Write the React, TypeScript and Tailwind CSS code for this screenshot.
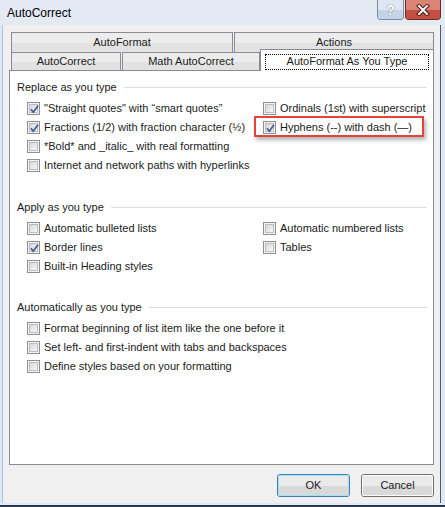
import React from "react";

const FONT = { fontFamily: '"Liberation Sans", Arial, sans-serif' };

function Check({ checked }: { checked?: boolean }) {
  return (
    <span className="relative w-[13px] h-[13px] shrink-0 border border-[#8e8f8f] bg-[#f4f4f4] p-[1px]">
      <span className="block w-full h-full border border-[#b9bcc0] bg-[#e6e7e8] bg-linear-to-br from-[#d6d7d9] to-[#f8f8f8]" />
      {checked && (
        <svg className="absolute left-[1px] top-[1px]" width="11" height="11" viewBox="0 0 11 11">
          <path d="M2 5.2 L4.3 8.2 L9 1.8" fill="none" stroke="#4a5c96" strokeWidth="1.8" strokeLinejoin="round" />
        </svg>
      )}
    </span>
  );
}

function Row({ label, checked, children }: { label: string; checked?: boolean; children?: React.ReactNode }) {
  return (
    <div className="relative h-[19px] flex items-center gap-[4px]">
      <Check checked={checked} />
      <span className="whitespace-nowrap leading-none">{label}</span>
      {children}
    </div>
  );
}

function Group({ title, children, className = "" }: { title: string; children: React.ReactNode; className?: string }) {
  return (
    <div className={className}>
      <div className="h-[16px] flex items-center gap-[7px]">
        <span className="whitespace-nowrap leading-none">{title}</span>
        <span className="flex-1 h-px bg-[#d5dfe5]" />
      </div>
      <div className="mt-[4px] pl-[10px]">{children}</div>
    </div>
  );
}

function TabT({ label, w }: { label: string; w: string }) {
  return (
    <div className={"relative h-full border border-b-0 border-[#898c95] bg-[#ececec] flex items-center justify-center " + w}>
      <div className="absolute left-0 right-0 bottom-0 h-1/2 bg-[#e2e2e2]" />
      <span className="relative leading-none">{label}</span>
    </div>
  );
}

function WinButton({ label, primary }: { label: string; primary?: boolean }) {
  return (
    <div
      className={
        "relative w-[73px] h-[23px] rounded-[3px] border flex items-center justify-center bg-[#eaeaea] " +
        (primary ? "border-[#3c7fb1]" : "border-[#707070]")
      }
    >
      <div className="absolute left-0 right-0 bottom-0 h-1/2 rounded-b-[2px] bg-[#d9d9d9]" />
      <div className={"absolute inset-0 rounded-[2px] border " + (primary ? "border-[#9fe2fa]" : "border-[#fbfbfb]")} />
      <span className="relative leading-none">{label}</span>
    </div>
  );
}

export default function App() {
  return (
    <div className="w-[445px] h-[507px] bg-[#dfe8f3] flex flex-col overflow-hidden text-[11px] text-[#1b1b1b] border-b-2 border-[#26384a]" style={FONT}>
      {/* Title bar */}
      <div className="h-[25px] shrink-0 flex items-start bg-[#e3eaf4]">
        <div className="pl-[7px] pt-[7px] text-[12px] leading-none text-black">AutoCorrect</div>
        <div className="ml-auto mr-[4px] flex gap-[1px]">
          <div className="relative w-[27px] h-[20px] rounded-b-[4px] border border-t-0 border-[#7b8ca4] bg-[#dde6f1] flex items-center justify-center">
            <div className="absolute left-0 right-0 bottom-0 h-1/2 rounded-b-[3px] bg-[#c4d3e6]" />
            <span className="relative text-[14px] font-bold leading-none text-white [text-shadow:0_0_1px_#2f3d50]">?</span>
          </div>
          <div className="relative w-[36px] h-[20px] rounded-b-[4px] border border-t-0 border-[#6b2a25] bg-[#d98474] flex items-center justify-center">
            <div className="absolute left-0 right-0 bottom-0 h-1/2 rounded-b-[3px] bg-[#c24f3f]" />
            <svg className="relative" width="14" height="12" viewBox="0 0 14 12">
              <path d="M3 2 L11 10 M11 2 L3 10" stroke="#4a1a14" strokeWidth="4" strokeLinecap="square" />
              <path d="M3 2 L11 10 M11 2 L3 10" stroke="#ffffff" strokeWidth="2" strokeLinecap="square" />
            </svg>
          </div>
        </div>
      </div>

      {/* Client area */}
      <div className="flex-1 ml-[2px] mr-[4px] mb-[2px] border-l border-[#a9c4e0] border-r border-r-[#4d5b68] bg-[#f0f0f0] pt-[7px] pl-[6px] pr-[6px] flex flex-col">
        {/* Tabs row 1 */}
        <div className="h-[20px] flex gap-[1px] ml-[2px]">
          <TabT label="AutoFormat" w="w-[222px]" />
          <TabT label="Actions" w="w-[200px]" />
        </div>
        {/* Tabs row 2 */}
        <div className="h-[18px] flex ml-[2px] relative z-10">
          <TabT label="AutoCorrect" w="w-[110px]" />
          <div className="ml-[1px] h-full flex">
            <TabT label="Math AutoCorrect" w="w-[138px]" />
          </div>
          <div className="w-[174px] h-[22px] -mt-[3px] bg-white border border-b-0 border-[#898c95] flex items-center justify-center px-[4px] pt-[2px]">
            <div className="w-full h-[16px] border border-dotted border-black flex items-center justify-center">
              <span className="leading-none">AutoFormat As You Type</span>
            </div>
          </div>
        </div>

        {/* Panel */}
        <div className="h-[395px] bg-white border border-[#898c95] pt-[8px] pl-[7px] pr-[6px]">
          <Group title="Replace as you type">
            <div className="grid grid-cols-[236px_1fr]">
              <div>
                <Row label={'"Straight quotes" with \u201csmart quotes\u201d'} checked />
                <Row label={"Fractions (1/2) with fraction character (\u00bd)"} checked />
                <Row label="*Bold* and _italic_ with real formatting" />
                <Row label="Internet and network paths with hyperlinks" />
              </div>
              <div>
                <Row label="Ordinals (1st) with superscript" />
                <Row label={"Hyphens (--) with dash (\u2014)"} checked>
                  <span className="absolute -left-[9px] -top-[2px] w-[170px] h-[21px] border-2 border-[#e5433a] shadow-[2px_3px_4px_rgba(0,0,0,0.3)]" />
                </Row>
              </div>
            </div>
          </Group>

          <Group title="Apply as you type" className="mt-[24px]">
            <div className="grid grid-cols-[236px_1fr]">
              <div>
                <Row label="Automatic bulleted lists" />
                <Row label="Border lines" checked />
                <Row label="Built-in Heading styles" />
              </div>
              <div>
                <Row label="Automatic numbered lists" />
                <Row label="Tables" />
              </div>
            </div>
          </Group>

          <Group title="Automatically as you type" className="mt-[23px]">
            <Row label="Format beginning of list item like the one before it" />
            <Row label="Set left- and first-indent with tabs and backspaces" />
            <Row label="Define styles based on your formatting" />
          </Group>
        </div>

        {/* Buttons */}
        <div className="mt-[9px] flex justify-end gap-[11px]">
          <WinButton label="OK" primary />
          <WinButton label="Cancel" />
        </div>
      </div>
    </div>
  );
}
